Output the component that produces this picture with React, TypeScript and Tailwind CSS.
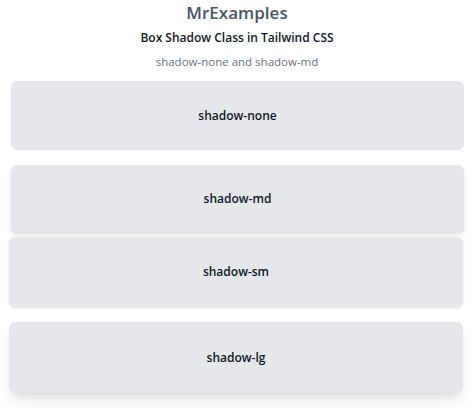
const cards = [
  { label: "shadow-none", cls: "shadow-none rounded-md h-[69px] mt-[10px] ml-[11px] mr-[10px]" },
  { label: "shadow-md", cls: "shadow-md rounded-t-md h-[67px] mt-[15px] ml-[11px] mr-[10px]" },
  { label: "shadow-sm", cls: "shadow-sm rounded-md h-[70px] mt-[5px] ml-[9px] mr-[11px]" },
  { label: "shadow-lg", cls: "shadow-lg rounded-md h-[71px] mt-[15px] ml-[9px] mr-[11px]" },
];

export default function App() {
  return (
    <div className="w-[474px] h-[408px] bg-white overflow-hidden font-['Open_Sans',sans-serif]">
      <div className="flex flex-col items-center pt-[1px]">
        <h1 className="text-[17px] leading-[24px] font-semibold text-gray-600">MrExamples</h1>
        <h2 className="mt-[3px] text-[12px] leading-[20px] font-semibold text-gray-900">
          Box Shadow Class in Tailwind CSS
        </h2>
        <p className="mt-[5px] text-[11.5px] leading-[18px] font-medium text-gray-500">
          shadow-none and shadow-md
        </p>
      </div>
      {cards.map((c) => (
        <div key={c.label} className={`bg-gray-200 flex items-center justify-center ${c.cls}`}>
          <span className="text-[12px] font-semibold text-gray-900">{c.label}</span>
        </div>
      ))}
    </div>
  );
}
